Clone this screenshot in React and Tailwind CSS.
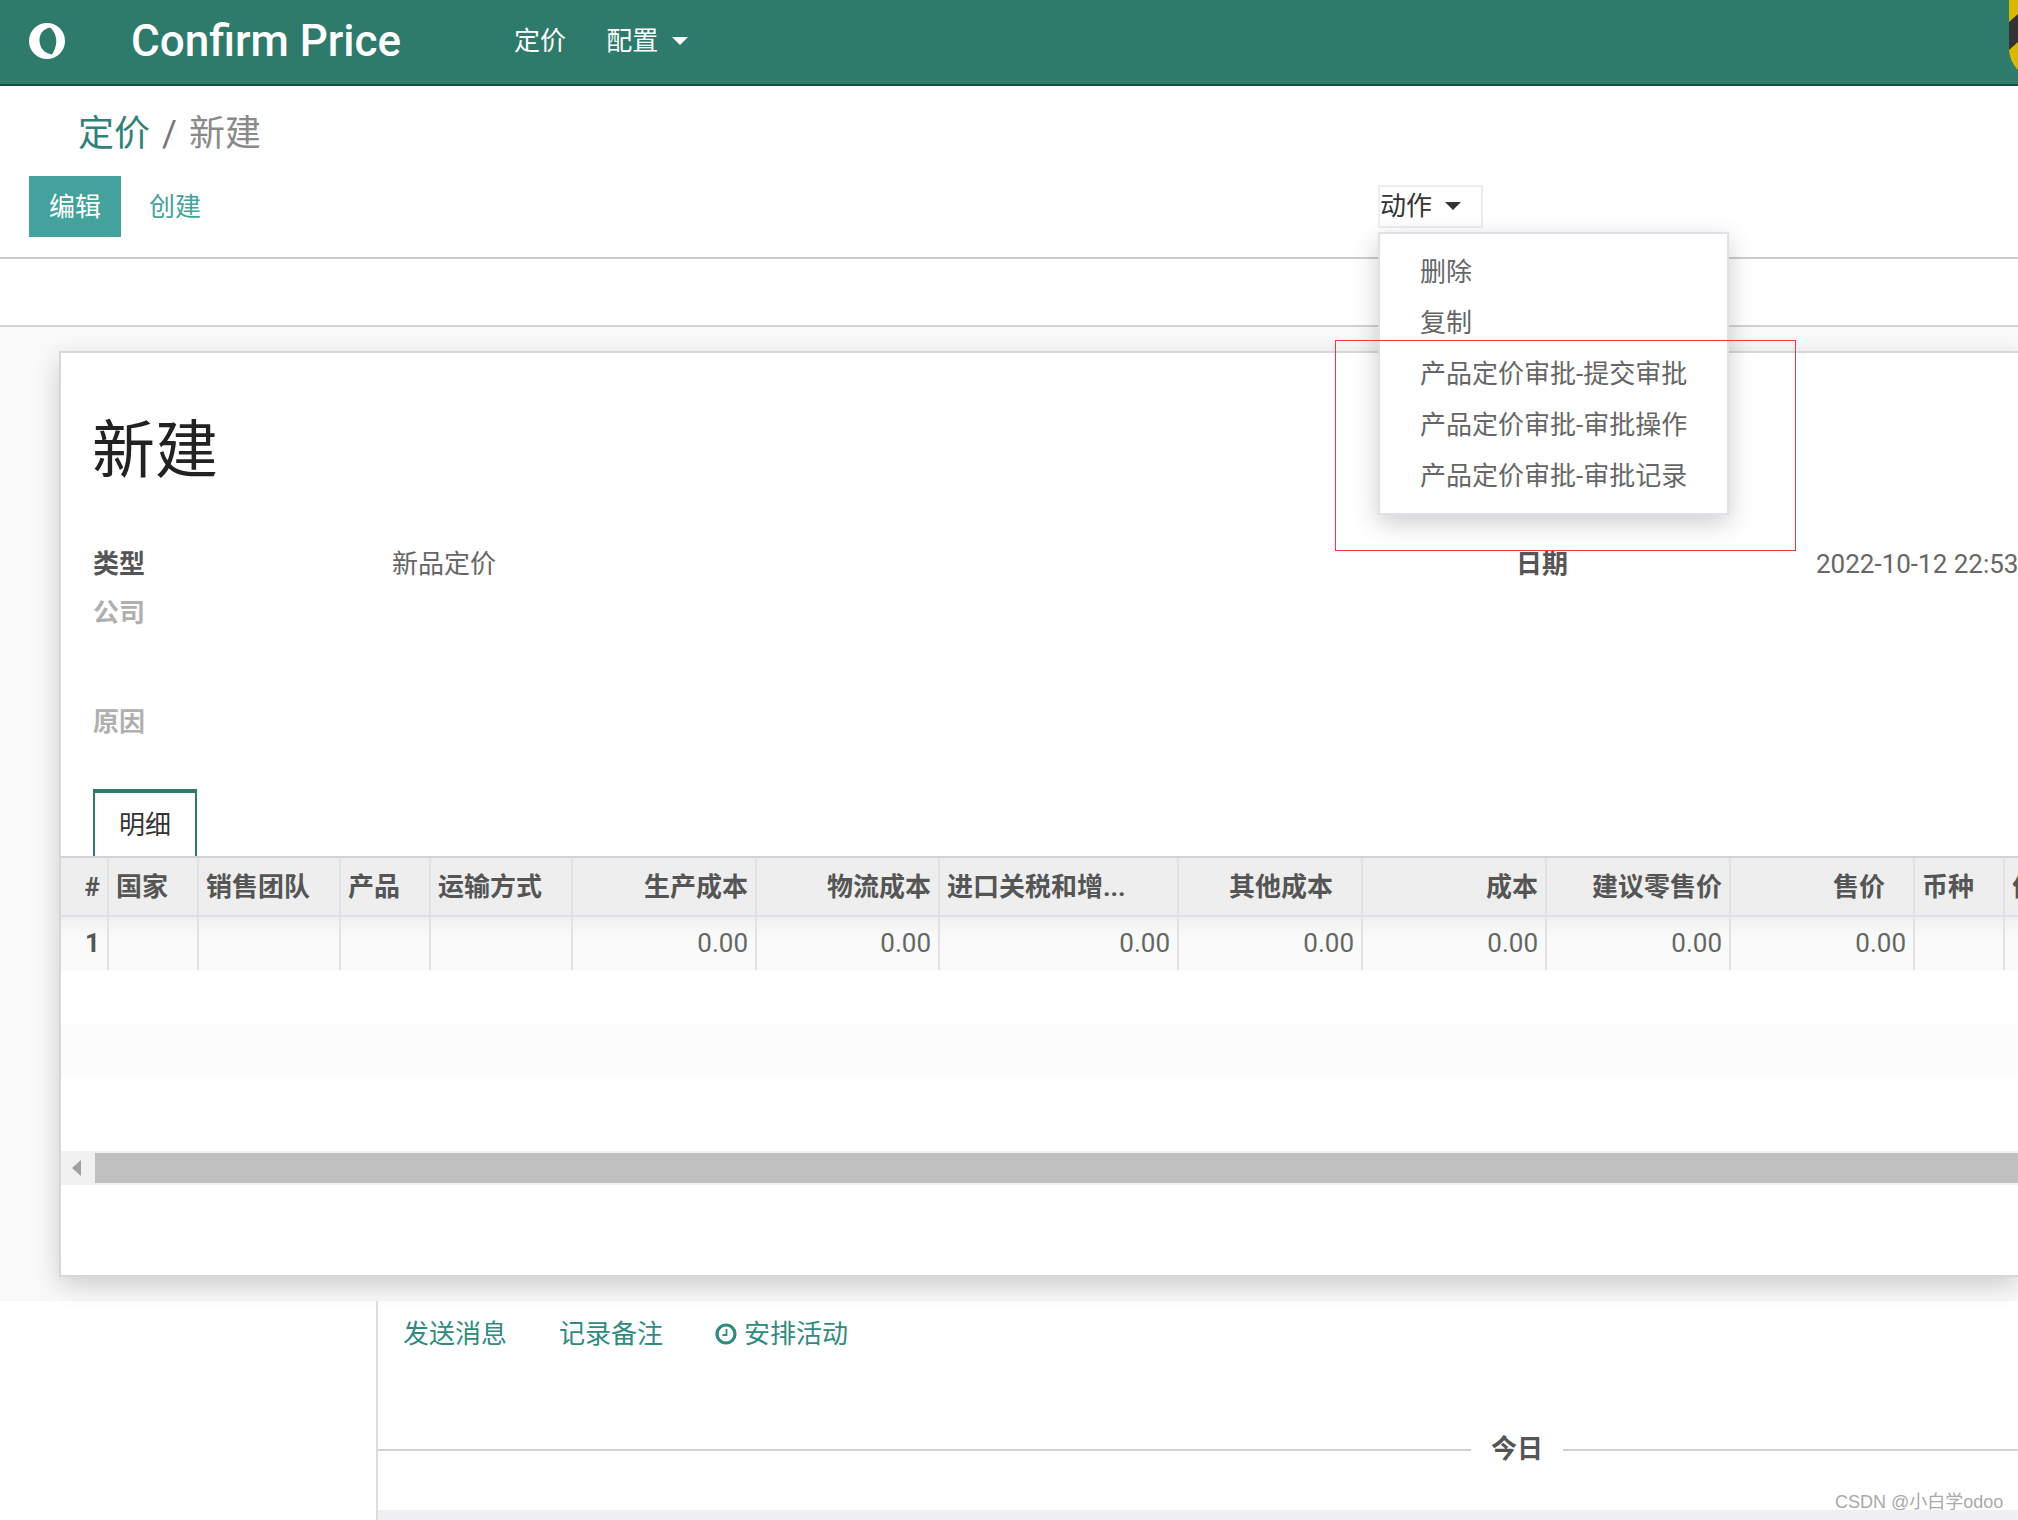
import React from "react";

const cols = [
  ["#", "r"], ["国家", "l"], ["销售团队", "l"], ["产品", "l"], ["运输方式", "l"],
  ["生产成本", "r"], ["物流成本", "r"], ["进口关税和增...", "l"], ["其他成本", "s"],
  ["成本", "r"], ["建议零售价", "r"], ["售价", "s"], ["币种", "l"], ["价格", "l"],
];
const row = ["1", "", "", "", "", "0.00", "0.00", "0.00", "0.00", "0.00", "0.00", "0.00", "", ""];
const gridCls = "grid grid-cols-[48px_90px_142px_90px_142px_184px_183px_239px_184px_184px_184px_184px_90px_80px]";
const menu = ["删除", "复制", "产品定价审批-提交审批", "产品定价审批-审批操作", "产品定价审批-审批记录"];

function Logo() {
  return (
    <svg viewBox="0 0 36 36" className="w-[36px] h-[36px] shrink-0 -mt-[3px]">
      <ellipse cx="18" cy="18" rx="18" ry="18" fill="#fff" />
      <path d="M21 4.5C13.5 6 10 12 10.5 18 11 25 15 30 23 31.5 26.5 26 28 20 27 15 26 10 24 7 21 4.5Z" fill="#2e7a6b" />
    </svg>
  );
}

function Avatar() {
  return (
    <svg viewBox="0 0 9 70" className="w-[9px] h-[70px] shrink-0 self-start ml-auto">
      <path d="M0 0H9V70C5 66 1 60 0 50Z" fill="#d9b800" />
      <path d="M0 22L9 14V42L0 50Z" fill="#333333" />
    </svg>
  );
}

function Clock() {
  return (
    <svg viewBox="0 0 22 22" className="w-[22px] h-[24px] shrink-0" fill="none" stroke="currentColor">
      <circle cx="11" cy="11" r="9" strokeWidth="3.2" />
      <path d="M11.5 6V12H7.5" strokeWidth="1.8" />
    </svg>
  );
}

function Caret({ cls }) {
  return <span className={"inline-block w-0 h-0 border-l-[8px] border-r-[8px] border-t-[8px] border-l-transparent border-r-transparent " + cls} />;
}

function Field({ label, value, muted, extra }) {
  return (
    <div className="grid grid-cols-[299px_1125px_299px_auto] h-[49px] items-center whitespace-nowrap text-[26px]">
      <span className={"font-bold " + (muted ? "text-[#b0b0b0]" : "text-[#555555]")}>{label}</span>
      <span className="text-[#666666]">{value}</span>
      {extra ? <span className="font-bold text-[#555555] -ml-px">{extra[0]}</span> : null}
      {extra ? <span className="text-[#666666]">{extra[1]}</span> : null}
    </div>
  );
}

export default function App() {
  return (
    <div className="relative w-[2018px] h-[1520px] overflow-hidden flex flex-col bg-white font-['Roboto','Noto_Sans_CJK_SC',sans-serif]">
      {/* top bar */}
      <header className="h-[86px] shrink-0 flex items-center bg-[#2e7a6b] border-b-2 border-[#1b4a41] pl-[29px] text-white">
        <Logo />
        <span className="ml-[66px] -mt-[2px] text-[44px] font-medium leading-none">Confirm Price</span>
        <span className="ml-[113px] -mt-[2px] text-[26px]">定价</span>
        <span className="ml-[40px] -mt-[2px] text-[26px]">配置</span>
        <Caret cls="ml-[14px] -mt-[2px] border-t-white" />
        <Avatar />
      </header>

      {/* control panel */}
      <section className="h-[173px] shrink-0 border-b-2 border-[#cccccc] pl-[29px]">
        <div className="pt-[25px] pl-[49px] h-[90px] text-[36px] leading-[46px] whitespace-nowrap">
          <span className="text-[#2f8277]">定价</span>
          <span className="text-[#777777] mx-[12px]">/</span>
          <span className="text-[#8a8a8a]">新建</span>
        </div>
        <div className="flex items-center text-[26px]">
          <span className="w-[92px] h-[61px] flex items-center justify-center bg-[#43a39c] text-white pt-[1px]">编辑</span>
          <span className="ml-[28px] pt-[1px] text-[#43a39c]">创建</span>
        </div>
      </section>

      {/* status bar */}
      <div className="h-[68px] shrink-0 border-b-2 border-[#d0d2d6]" />

      {/* sheet */}
      <main className="h-[974px] shrink-0 bg-[#f9f9f9] pl-[60px] pt-[24px]">
        <div className="h-[926px] -ml-px border-2 border-r-0 border-[#d5d7da] bg-white shadow-[0_8px_24px_rgba(0,0,0,0.18)]">
          <div className="pl-[31px] pt-[67px] text-[63px] leading-[62px] text-[#222222]">新建</div>
          <div className="pl-[32px] mt-[58px]">
            <Field label="类型" value="新品定价" extra={["日期", "2022-10-12 22:53"]} />
            <Field label="公司" value="" muted />
            <div className="mt-[60px]">
              <Field label="原因" value="" muted />
            </div>
          </div>
          <div className="pl-[32px] mt-[42px]">
            <div className="w-[104px] h-[68px] border-x-2 border-t-4 border-[#2e7a6b] flex items-center justify-center text-[26px] text-[#333333] bg-white">
              明细
            </div>
          </div>
          <div className="border-t-2 border-[#d0d4d8] -mt-px">
            <div className={gridCls + " h-[59px] bg-[#eeeeee] border-b-2 border-[#dee2e6] text-[26px] font-bold text-[#555555]"}>
              {cols.map(([t, a], i) => (
                <div
                  key={i}
                  className={
                    "flex items-center pl-[7px] pt-[2px] whitespace-nowrap overflow-hidden border-r-2 border-[#e0e2e5] " +
                    (a === "l" ? "justify-start pr-[7px]" : a === "s" ? "justify-end pr-[28px]" : "justify-end pr-[7px]")
                  }
                >
                  {t}
                </div>
              ))}
            </div>
            <div className={gridCls + " h-[53px] bg-gradient-to-b from-[#f0f0f0] to-[#fafafa] to-40% text-[26px] text-[#666666]"}>
              {row.map((t, i) => (
                <div key={i} className={"flex items-center justify-end px-[7px] border-r-2 border-[#e0e2e5] " + (i === 0 ? "font-bold text-[#555555]" : "")}>
                  {t}
                </div>
              ))}
            </div>
            <div className="h-[54px]" />
            <div className="h-[53px] bg-[#fcfcfc]" />
            <div className="h-[74px]" />
            <div className="h-[34px] bg-[#f1f1f1] flex items-center">
              <div className="w-[34px] pr-[3px] flex justify-center">
                <span className="w-0 h-0 border-y-[8px] border-r-[9px] border-y-transparent border-r-[#a0a0a0]" />
              </div>
              <div className="flex-1 h-[30px] bg-[#c0c0c0]" />
            </div>
          </div>
        </div>
      </main>

      {/* chatter */}
      <section className="flex-1 flex">
        <div className="w-[376px] shrink-0" />
        <div className="flex-1 flex flex-col border-l-2 border-[#dddddd]">
          <div className="h-[148px] pt-[15px] pl-[25px] flex items-start gap-[52px] text-[26px] leading-[36px] text-[#2f8a80]">
            <span>发送消息</span>
            <span>记录备注</span>
            <span className="flex items-center gap-[7px]">
              <Clock />
              安排活动
            </span>
          </div>
          <div className="h-[61px] flex items-start">
            <div className="w-[1093px] h-[2px] bg-[#d0d2d6]" />
            <div className="w-[92px] flex justify-center -mt-[18px] text-[26px] leading-[36px] font-bold text-[#555555]">今日</div>
            <div className="flex-1 h-[2px] bg-[#d0d2d6]" />
          </div>
          <div className="flex-1 bg-[#eef0f2]" />
        </div>
      </section>

      {/* action dropdown */}
      <div className="absolute left-[1378px] top-[185px] w-[105px] h-[43px] border-2 border-[#eeeeee] flex items-center text-[26px] text-[#333333]">
        动作
        <Caret cls="ml-[13px] -mt-[2px] border-t-[#333333]" />
      </div>
      <div className="absolute left-[1378px] top-[232px] w-[351px] h-[283px] border-2 border-[#dee2e6] bg-white pt-[13px] pl-[40px] shadow-[0_8px_24px_rgba(0,0,0,0.2)] text-[26px] text-[#666666]">
        {menu.map((m) => (
          <div key={m} className="h-[51px] flex items-center whitespace-nowrap">{m}</div>
        ))}
      </div>

      {/* annotation */}
      <div className="absolute left-[1335px] top-[340px] w-[461px] h-[211px] border border-[#ee3b3b]" />

      {/* watermark */}
      <span className="absolute left-[1835px] top-[1490px] text-[18px] leading-[24px] text-[#aaaaaa] whitespace-nowrap font-['Liberation_Sans','Noto_Sans_CJK_SC',sans-serif]">CSDN @小白学odoo</span>
    </div>
  );
}
